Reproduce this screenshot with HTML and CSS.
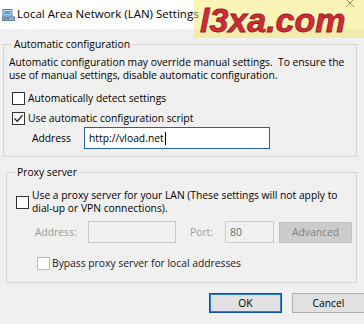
FILE: index.html
```html
<!DOCTYPE html>
<html lang="en">
<head>
    <meta charset="UTF-8">
    <meta name="viewport" content="width=device-width, initial-scale=1.0">
    <title>Local Area Network (LAN) Settings</title>
    <link rel="stylesheet" href="styles.css">
</head>
<body>

    <div class="window">
        <!-- Title bar -->
        <div class="titlebar">
            <svg class="app-icon" width="13" height="13" viewBox="0 0 13 13">
                <rect x="1" y="1.5" width="9" height="6.5" fill="#cfe3f3" stroke="#4f7fa8"/>
                <rect x="2.5" y="3" width="6" height="3.5" fill="#5aa0d8"/>
                <rect x="0.5" y="9" width="12" height="3.5" fill="#9fb6c9" stroke="#5f7f9a"/>
                <rect x="2" y="10.3" width="2" height="1" fill="#2f5f86"/>
                <rect x="5" y="10.3" width="2" height="1" fill="#2f5f86"/>
            </svg>
            <span class="title">Local Area Network (LAN) Settings</span>
            <svg class="close" width="10" height="8" viewBox="0 0 10 8">
                <path d="M1 -1 L9 7 M9 -1 L1 7" stroke="#555" stroke-width="1" fill="none"/>
            </svg>
        </div>

        <div class="client">
            <!-- Automatic configuration -->
            <fieldset class="group group-auto">
                <legend>Automatic configuration</legend>
                <p class="desc">Automatic configuration may override manual settings.&nbsp; To ensure the<br>use of manual settings, disable automatic configuration.</p>
                <label class="check first">
                    <span class="box"></span>
                    <span>Automatically detect settings</span>
                </label>
                <label class="check second">
                    <span class="box">
                        <svg width="11" height="11" viewBox="0 0 11 11"><path d="M1.5 5.5 L4.2 8.3 L9.5 2.2" stroke="#222" stroke-width="1.3" fill="none"/></svg>
                    </span>
                    <span>Use automatic configuration script</span>
                </label>
                <div class="address-row">
                    <span class="address-label">Address</span>
                    <div class="textbox active">http://vload.net<span class="caret"></span></div>
                </div>
            </fieldset>

            <!-- Proxy server -->
            <fieldset class="group group-proxy">
                <legend>Proxy server</legend>
                <label class="check multi">
                    <span class="box"></span>
                    <span>Use a proxy server for your LAN (These settings will not apply to<br>dial-up or VPN connections).</span>
                </label>
                <div class="proxy-row">
                    <span class="dim proxy-address">Address:</span>
                    <div class="textbox disabled address-field"></div>
                    <span class="dim port-label">Port:</span>
                    <div class="textbox disabled port-field">80</div>
                    <button class="btn disabled-btn">Advanced</button>
                </div>
                <label class="check bypass">
                    <span class="box box-disabled"></span>
                    <span>Bypass proxy server for local addresses</span>
                </label>
            </fieldset>

            <div class="buttons">
                <button class="btn btn-default">OK</button>
                <button class="btn">Cancel</button>
            </div>
        </div>

        <!-- watermark over the top right corner -->
        <div class="watermark">l3xa.com</div>
    </div>

</body>
</html>
```

FILE: styles.css
```css
/* Global reset */
* {
    margin: 0;
    padding: 0;
    box-sizing: border-box;
}

body {
    width: 364px;
    height: 324px;
    overflow: hidden;
    background: #f0f0f0;
    font-family: 'Open Sans', 'Noto Sans', sans-serif;
    font-size: 10.3px;
    color: #000;
}

.window {
    position: relative;
    width: 364px;
    height: 324px;
}

/* Title bar */
.titlebar {
    height: 29px;
    background: #fff;
    display: flex;
    align-items: center;
    padding: 0 0 3px 2px;
}

.app-icon {
    margin-right: 2px;
    margin-top: 2px;
}

.title {
    font-size: 11.5px;
    color: #000;
}

.close {
    margin-left: auto;
    margin-right: 9px;
    align-self: flex-start;
}

/* Dialog client area */
.client {
    padding: 9px 0 0 3px;
}

.group {
    border: 1px solid #d7d7d7;
    width: 354px;
    padding: 0 0 7px 5px;
}

.group legend {
    margin-left: 3px;
    padding: 0 2px;
    line-height: 13px;
}

.desc {
    margin-top: 5px;
    line-height: 13px;
}

.check {
    display: flex;
    align-items: center;
    gap: 3px;
    margin-left: 3px;
    line-height: 13px;
}

.check.first {
    margin-top: 10px;
}

.check.second {
    margin-top: 7px;
}

.box {
    width: 13px;
    height: 13px;
    flex: none;
    border: 1px solid #333;
    background: #fff;
    display: flex;
    align-items: center;
    justify-content: center;
}

.box-disabled {
    border-color: #bcbcbc;
}

.address-row {
    display: flex;
    align-items: center;
    margin-top: 2px;
}

.address-label {
    margin-left: 23px;
    width: 52px;
}

.textbox {
    height: 22px;
    background: #fff;
    border: 1px solid #7a7a7a;
    display: flex;
    align-items: center;
    padding-left: 4px;
}

.textbox.active {
    width: 186px;
    border-color: #2a5ea8;
}

.caret {
    width: 1px;
    height: 13px;
    background: #000;
    margin-left: 1px;
}

/* Proxy group */
.group-proxy {
    margin: 9px 0 0 3px;
    width: 351px;
    padding-bottom: 12px;
}

.check.multi {
    margin-top: 10px;
    margin-left: 4px;
}

.proxy-row {
    display: flex;
    align-items: center;
    margin-top: 6px;
}

.dim {
    color: #9a9a9a;
}

.proxy-address {
    margin-left: 23px;
    width: 53px;
}

.textbox.disabled {
    background: #f0f0f0;
    border-color: #cccccc;
    color: #6d6d6d;
}

.address-field {
    width: 88px;
}

.port-label {
    margin-left: 14px;
    width: 35px;
}

.port-field {
    width: 49px;
}

.check.bypass {
    margin-top: 14px;
    margin-left: 25px;
    gap: 2px;
    color: #1a1a1a;
}

/* Buttons */
.btn {
    font-family: inherit;
    font-size: 10.3px;
    height: 20px;
    width: 73px;
    background: #e1e1e1;
    border: 1px solid #adadad;
    color: #000;
}

.disabled-btn {
    margin-left: 5px;
    height: 21px;
    background: #cccccc;
    border-color: #bfbfbf;
    color: #838383;
}

.buttons {
    display: flex;
    justify-content: flex-end;
    gap: 10px;
    width: 362px;
    margin-top: 10px;
}

.btn-default {
    border: 1px solid #0f4fa3;
    box-shadow: inset 0 0 0 1px #2d7fd6;
}

/* Watermark */
.watermark {
    position: absolute;
    left: 194px;
    top: 0;
    width: 170px;
    height: 38px;
    padding-left: 6px;
    background: rgba(242, 230, 80, 0.42);
    font-family: 'Liberation Sans', sans-serif;
    font-size: 34px;
    font-weight: bold;
    font-style: italic;
    line-height: 40px;
    color: #d42a35;
    -webkit-text-stroke: 0.8px #8e1c22;
}
```
